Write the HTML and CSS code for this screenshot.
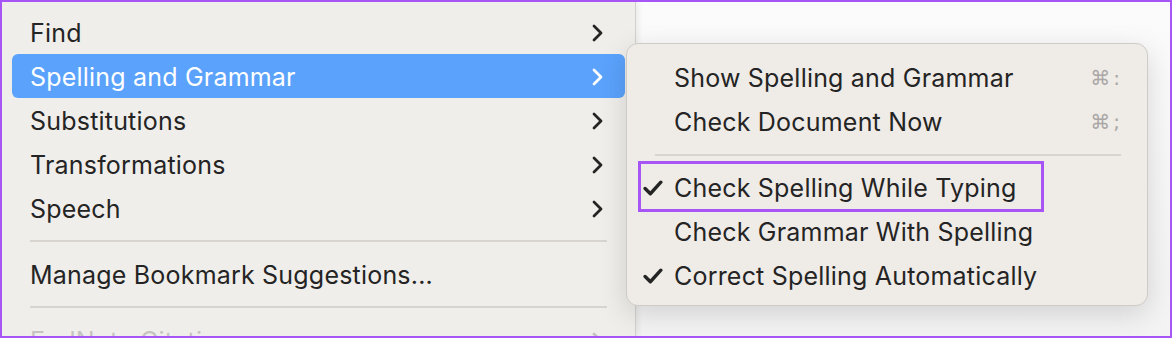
FILE: index.html
```html
<!DOCTYPE html>
<html lang="en">
<head>
  <meta charset="UTF-8">
  <title>Spelling and Grammar menu</title>
  <link rel="stylesheet" href="styles.css">
</head>
<body>

  <div class="frame">
    <div class="menu">
      <div class="item">Find <svg class="chev" viewBox="0 0 13 18"><path d="M3 2 L10 9 L3 16"/></svg></div>
      <div class="item active">Spelling and Grammar <svg class="chev" viewBox="0 0 13 18"><path d="M3 2 L10 9 L3 16"/></svg></div>
      <div class="item">Substitutions <svg class="chev" viewBox="0 0 13 18"><path d="M3 2 L10 9 L3 16"/></svg></div>
      <div class="item">Transformations <svg class="chev" viewBox="0 0 13 18"><path d="M3 2 L10 9 L3 16"/></svg></div>
      <div class="item">Speech <svg class="chev" viewBox="0 0 13 18"><path d="M3 2 L10 9 L3 16"/></svg></div>
      <div class="sep"></div>
      <div class="item">Manage Bookmark Suggestions...</div>
      <div class="sep"></div>
      <div class="item disabled">EndNote Citations <svg class="chev" viewBox="0 0 13 18"><path d="M3 2 L10 9 L3 16"/></svg></div>
    </div>

    <div class="submenu">
      <div class="sub-item"><span class="check"></span>Show Spelling and Grammar<span class="key">⌘:</span></div>
      <div class="sub-item"><span class="check"></span>Check Document Now<span class="key">⌘;</span></div>
      <div class="sep"></div>
      <div class="sub-item marked">
        <span class="check"><svg viewBox="0 0 20 16"><path d="M2 8 L7 13 L17 2"/></svg></span>Check Spelling While Typing
      </div>
      <div class="sub-item"><span class="check"></span>Check Grammar With Spelling</div>
      <div class="sub-item">
        <span class="check"><svg viewBox="0 0 20 16"><path d="M2 8 L7 13 L17 2"/></svg></span>Correct Spelling Automatically
      </div>
    </div>
  </div>

</body>
</html>
```

FILE: styles.css
```css
body {
  margin: 0;
  font-family: 'Inter', 'Noto Sans', sans-serif;
  background: #fff;
}

.frame {
  position: relative;
  width: 1172px;
  height: 338px;
  box-sizing: border-box;
  border: 2px solid #a855f7;
  overflow: hidden;
  background: linear-gradient(180deg, #fbfbfb, #f3f3f3);
}

.menu {
  width: 634px;
  height: 100%;
  box-sizing: border-box;
  padding: 8px 10px 0 10px;
  background: #f0eeea;
  border-right: 1px solid #d3d1ce;
  box-shadow: 2px 0 6px rgba(0, 0, 0, 0.08);
}

.item {
  height: 44px;
  display: flex;
  align-items: center;
  justify-content: space-between;
  padding: 2px 21px 0 18px;
  box-sizing: border-box;
  border-radius: 6px;
  font-size: 25px;
  color: #242424;
  letter-spacing: 0.2px;
}

.item.active {
  background: #5aa2fc;
  color: #fff;
}

.item.disabled {
  color: #c6c4c1;
}

.chev {
  width: 13px;
  height: 18px;
  fill: none;
  stroke: currentColor;
  stroke-width: 2.8;
  stroke-linecap: round;
  stroke-linejoin: round;
}

.sep {
  height: 22px;
  margin: 0 18px;
  display: flex;
  align-items: center;
}

.sep::before {
  content: '';
  flex: 1;
  height: 2px;
  background: #d8d5d1;
}

/* popup submenu over the main menu */
.submenu {
  position: absolute;
  left: 624px;
  top: 41px;
  width: 522px;
  height: 263px;
  box-sizing: border-box;
  padding: 12px 0 0 0;
  background: #efebe7;
  border: 1px solid #cfccc8;
  border-radius: 12px;
  box-shadow: 0 8px 28px rgba(0, 0, 0, 0.14);
}

.submenu .sep {
  height: 22px;
  margin: 0 26px 0 28px;
}

.sub-item {
  position: relative;
  height: 44px;
  display: flex;
  align-items: center;
  padding: 0 24px 0 16px;
  font-size: 25px;
  color: #242424;
  letter-spacing: 0.2px;
}

.check {
  width: 31px;
  flex: none;
  display: flex;
  align-items: center;
}

.check svg {
  width: 21px;
  height: 17px;
  fill: none;
  stroke: #242424;
  stroke-width: 3.2;
  stroke-linecap: round;
  stroke-linejoin: round;
}

.key {
  margin-left: auto;
  color: #a9a7a5;
  font-family: 'DejaVu Sans', sans-serif;
  font-size: 20px;
  letter-spacing: 3px;
}

/* annotation box */
.sub-item.marked::after {
  content: '';
  position: absolute;
  left: 11px;
  top: -5px;
  width: 406px;
  height: 51px;
  box-sizing: border-box;
  border: 3px solid #a855f7;
}
```
